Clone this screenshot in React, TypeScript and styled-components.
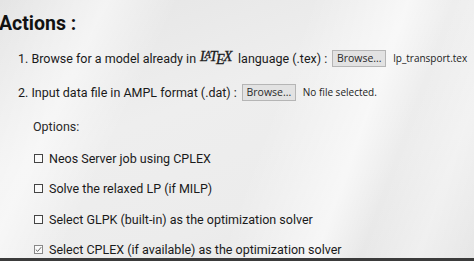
import styled, { createGlobalStyle } from 'styled-components';

const GlobalStyle = createGlobalStyle`
    html, body {
        margin: 0;
        padding: 0;
    }
    body {
        width: 474px;
        height: 261px;
        overflow: hidden;
        font-family: Roboto, "Liberation Sans", sans-serif;
        color: #1e1e1e;
    }
`;

const options = [
    { label: 'Neos Server job using CPLEX', checked: false },
    { label: 'Solve the relaxed LP (if MILP)', checked: false },
    { label: 'Select GLPK (built-in) as the optimization solver', checked: false },
    { label: 'Select CPLEX (if available) as the optimization solver', checked: true },
];

function LaTeX() {
    return (
        <Logo>
            L<LogoA>A</LogoA>T<LogoE>E</LogoE>X
        </Logo>
    );
}

export default function App() {
    return (
        <>
            <GlobalStyle />
            <Page>
                <Heading>Actions :</Heading>
                <Steps>
                    <Step>
                        1. Browse for a model already in <LaTeX /> language (.tex) :
                        <FilePick>
                            <BrowseButton>Browse...</BrowseButton>
                            <FileName>lp_transport.tex</FileName>
                        </FilePick>
                    </Step>
                    <Step>
                        2. Input data file in AMPL format (.dat) :
                        <FilePick>
                            <BrowseButton>Browse...</BrowseButton>
                            <FileName>No file selected.</FileName>
                        </FilePick>
                    </Step>
                </Steps>
                <Options>
                    <OptionsTitle>Options:</OptionsTitle>
                    {options.map((o) => (
                        <OptionRow key={o.label}>
                            <Box $checked={o.checked}>
                                {o.checked && (
                                    <svg width="7" height="7" viewBox="0 0 7 7">
                                        <path d="M0.8 3.6 L2.7 5.4 L6.2 1.2" fill="none" stroke="#666" strokeWidth="1" />
                                    </svg>
                                )}
                            </Box>
                            {o.label}
                        </OptionRow>
                    ))}
                </Options>
            </Page>
            <BottomBar />
        </>
    );
}

const Page = styled.div`
    height: 258px;
    box-sizing: border-box;
    padding-top: 11px;
    background:
        linear-gradient(115deg, rgba(255,255,255,0) 0%, rgba(255,255,255,0.55) 18%, rgba(255,255,255,0) 30%),
        linear-gradient(110deg, rgba(255,255,255,0) 55%, rgba(255,255,255,0.6) 72%, rgba(255,255,255,0) 80%, rgba(255,255,255,0.35) 90%, rgba(255,255,255,0) 100%),
        linear-gradient(160deg, #e4e4e4 0%, #eeeeee 40%, #ececec 70%, #e6e6e6 100%);
    display: flex;
    flex-direction: column;
`;

const Heading = styled.div`
    font-size: 19.5px;
    font-weight: 700;
    line-height: 26px;
    color: #111;
    margin-left: -1px;
`;

const Steps = styled.div`
    display: flex;
    flex-direction: column;
    padding-left: 18px;
    margin-top: 4px;
`;

const Step = styled.div`
    display: flex;
    align-items: center;
    height: 34px;
    font-size: 12.5px;
    white-space: nowrap;
    color: #1a1a1a;
`;

const Logo = styled.span`
    font-family: "Liberation Serif", serif;
    font-style: italic;
    font-size: 14.5px;
    margin: 0 6px 0 4px;
    letter-spacing: -0.4px;
    color: #1a1a1a;
    -webkit-text-stroke: 0.3px #1a1a1a;
`;

const LogoA = styled.span`
    font-size: 10px;
    vertical-align: 3px;
    margin-left: -3px;
    margin-right: -1px;
`;

const LogoE = styled.span`
    vertical-align: -3px;
    margin-left: -1px;
    margin-right: -1px;
`;

const FilePick = styled.span`
    display: inline-flex;
    align-items: center;
    gap: 7px;
    margin-left: 5px;
`;

const BrowseButton = styled.span`
    display: inline-flex;
    align-items: center;
    justify-content: center;
    box-sizing: border-box;
    height: 17px;
    width: 54px;
    border: 1px solid #b5b5b5;
    background: #e2e2e2;
    font-family: "Open Sans", "DejaVu Sans", sans-serif;
    font-size: 10.5px;
    color: #2a2a2a;
`;

const FileName = styled.span`
    font-family: "Open Sans", "DejaVu Sans", sans-serif;
    font-size: 10px;
    color: #222;
`;

const Options = styled.div`
    display: flex;
    flex-direction: column;
    padding-left: 33px;
`;

const OptionsTitle = styled.div`
    font-size: 12.5px;
    height: 34px;
    display: flex;
    align-items: center;
    color: #2a2a2a;
`;

const OptionRow = styled.div`
    display: flex;
    align-items: center;
    gap: 6px;
    height: 30.5px;
    font-size: 12.5px;
    white-space: nowrap;
    padding-left: 1px;
    color: #1a1a1a;
`;

const Box = styled.span<{ $checked: boolean }>`
    box-sizing: border-box;
    width: 9px;
    height: 9px;
    border: 1px solid ${(p) => (p.$checked ? '#888' : '#444')};
    background: #fafafa;
    display: flex;
    align-items: center;
    justify-content: center;
`;

const BottomBar = styled.div`
    height: 3px;
    background: #3b3b3b;
`;
